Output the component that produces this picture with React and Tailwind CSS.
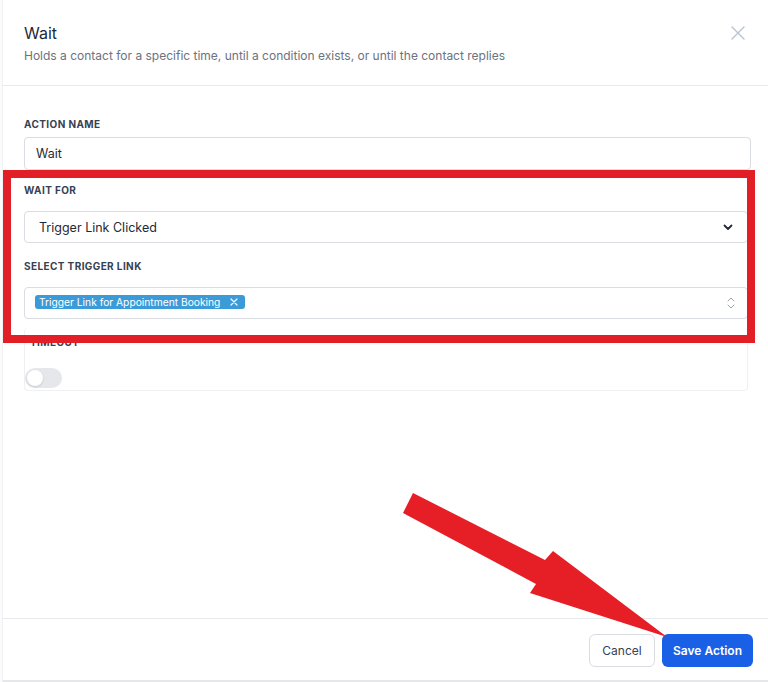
import React from 'react';

const labelCls = 'block text-[10px] leading-[14px] font-bold uppercase tracking-[0.04em] text-[#374151]';

const ChevronDown = () => (
  <svg width="12" height="12" viewBox="0 0 12 12" fill="none">
    <path d="M2.5 4.5 6 8l3.5-3.5" stroke="#1f2937" strokeWidth="1.8" strokeLinecap="round" strokeLinejoin="round" />
  </svg>
);

const UpDown = () => (
  <svg width="10" height="14" viewBox="0 0 10 14" fill="none">
    <path d="M2 5 5 2l3 3M2 9l3 3 3-3" stroke="#9ca3af" strokeWidth="1" strokeLinecap="round" strokeLinejoin="round" />
  </svg>
);

const App = () => {
  return (
    <div className="w-[768px] h-[682px] relative overflow-hidden bg-white flex" style={{ fontFamily: 'Inter, "Liberation Sans", sans-serif' }}>
      {/* sliver of the page behind the drawer */}
      <div className="w-[3px] shrink-0 border-r border-[#eef0f3] bg-[#fbfbfc]" />

      <div className="flex-1 flex flex-col border-b-2 border-[#e5e7eb]">
        {/* header */}
        <div className="flex items-start justify-between pl-[21px] pr-[23px] pt-[21px] pb-[20px] border-b border-[#e8eaee]">
          <div>
            <h2 className="text-[16px] leading-6 text-[#1f2937]">Wait</h2>
            <p className="mt-[2px] text-[12px] leading-[18px] text-[#6b7280]">
              Holds a contact for a specific time, until a condition exists, or until the contact replies
            </p>
          </div>
          <button className="mt-[5px]">
            <svg width="14" height="14" viewBox="0 0 14 14" fill="none">
              <path d="M1 1l12 12M13 1 1 13" stroke="#b8c4d4" strokeWidth="1.4" strokeLinecap="round" />
            </svg>
          </button>
        </div>

        {/* body */}
        <div className="flex-1 pl-[21px] pr-[17px] pt-[31px]">
          <label className={labelCls}>Action Name</label>
          <input
            type="text"
            defaultValue="Wait"
            className="mt-[6px] w-full h-[33px] border border-[#d9dce1] rounded-[4px] px-[11px] text-[12.5px] text-[#1f2937] bg-white outline-none"
          />

          <label className={`${labelCls} mt-[13px]`}>Wait For</label>
          <div className="mt-[14px] w-[724px] h-[32px] border border-[#d9dce1] rounded-[4px] flex items-center justify-between pl-[14px] pr-[13px] text-[12.5px] text-[#1f2937]">
            <span className="pt-[2px]">Trigger Link Clicked</span>
            <ChevronDown />
          </div>

          <label className={`${labelCls} mt-[16px]`}>Select Trigger Link</label>
          <div className="mt-[14px] w-[724px] h-[32px] border border-[#d9dce1] rounded-[4px] flex items-center justify-between pl-[10px] pr-[11px]">
            <span className="inline-flex items-center h-[14px] -mt-[2px] rounded-[3px] bg-[#3b9ad8] pl-[4px] pr-[7px] text-[10.25px] leading-[14px] text-white">
              Trigger Link for Appointment Booking
              <svg className="ml-[10px]" width="8" height="8" viewBox="0 0 8 8" fill="none">
                <path d="M1 1l6 6M7 1 1 7" stroke="#ffffff" strokeWidth="1.2" strokeLinecap="round" />
              </svg>
            </span>
            <UpDown />
          </div>

          <div className="mt-[9px] w-[724px] h-[63px] border border-[#eef0f3] rounded-[4px] border-t-0 pt-[7px]">
            <label className={`${labelCls} pl-[5px] text-[#9ca3af]`}>Timeout</label>
            <div className="mt-[19px] w-[37px] h-[20px] rounded-full bg-[#e5e7eb] p-[2px]">
              <div className="w-[16px] h-[16px] rounded-full bg-white shadow-sm" />
            </div>
          </div>
        </div>

        {/* footer */}
        <div className="h-[62px] border-t border-[#e8eaee] flex items-start justify-end gap-[7px] pt-[15px] pr-[15px]">
          <button className="h-[33px] w-[66px] rounded-[6px] border border-[#d9dce1] bg-white text-[12px] text-[#374151]">
            Cancel
          </button>
          <button className="h-[33px] w-[91px] rounded-[6px] bg-[#1a60e6] text-[12px] font-semibold text-white">
            Save Action
          </button>
        </div>
      </div>

      {/* red annotation box */}
      <div className="absolute left-[3px] top-[170px] w-[752px] h-[173px] border-[8px] border-[#e21f26] pointer-events-none" />

      {/* red annotation arrow */}
      <svg className="absolute left-0 top-0 pointer-events-none" width="768" height="682" viewBox="0 0 768 682">
        <polygon points="413,493 545,560 553,551 667,637 530,593 536,584 403,513" fill="#e61e26" />
      </svg>
    </div>
  );
};

export default App;
